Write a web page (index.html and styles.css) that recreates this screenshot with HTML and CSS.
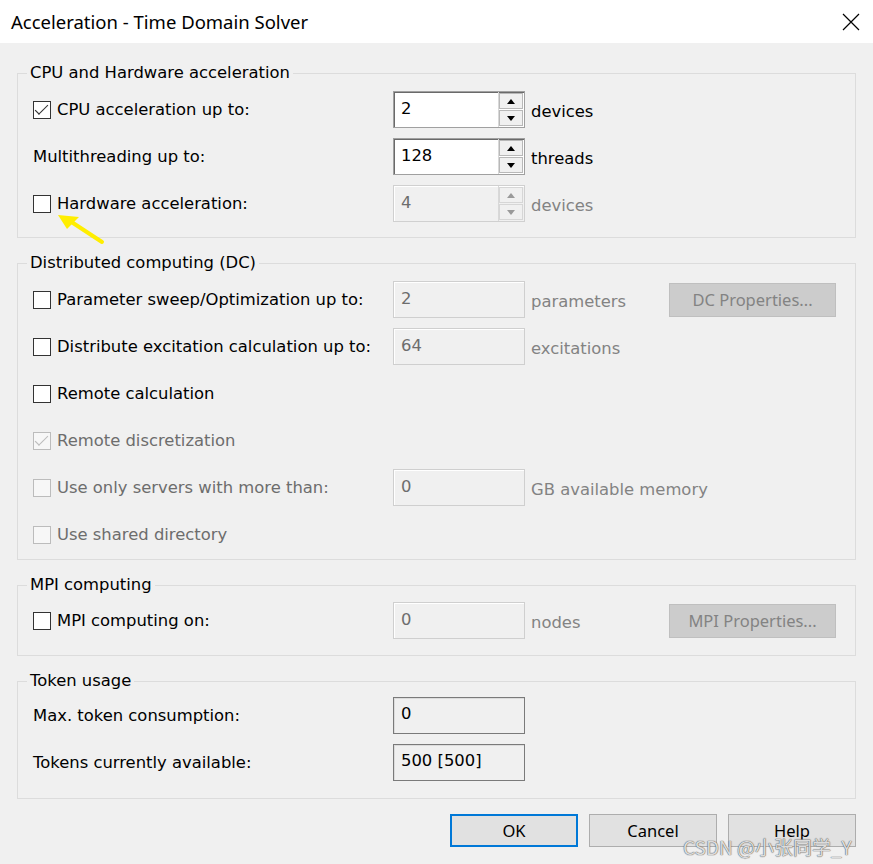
FILE: index.html
```html
<!DOCTYPE html>
<html>
<head>
<meta charset="utf-8">
<link rel="stylesheet" href="styles.css">
</head>
<body>
<div class="dialog">
  <div class="titlebar">
    <span class="title">Acceleration - Time Domain Solver</span>
    <svg class="close" width="18" height="18" viewBox="0 0 18 18"><path d="M1 1 L17 17 M17 1 L1 17" stroke="#000" stroke-width="1.2" fill="none"/></svg>
  </div>
  <div class="content">
    <fieldset class="group g1">
      <legend>CPU and Hardware acceleration</legend>
      <div class="row">
        <label class="lbl"><span class="cb checked"></span>CPU acceleration up to:</label>
        <div class="spin"><span class="val">2</span><span class="arrows"><span class="ab"><i class="up"></i></span><span class="ab"><i class="down"></i></span></span></div>
        <span class="unit">devices</span>
      </div>
      <div class="row">
        <label class="lbl plain">Multithreading up to:</label>
        <div class="spin"><span class="val">128</span><span class="arrows"><span class="ab"><i class="up"></i></span><span class="ab"><i class="down"></i></span></span></div>
        <span class="unit">threads</span>
      </div>
      <div class="row">
        <label class="lbl"><span class="cb"></span>Hardware acceleration:</label>
        <div class="spin disabled"><span class="val">4</span><span class="arrows"><span class="ab"><i class="up"></i></span><span class="ab"><i class="down"></i></span></span></div>
        <span class="unit dis">devices</span>
      </div>
    </fieldset>

    <fieldset class="group g2">
      <legend>Distributed computing (DC)</legend>
      <div class="row">
        <label class="lbl"><span class="cb"></span>Parameter sweep/Optimization up to:</label>
        <div class="field disabled">2</div>
        <span class="unit dis">parameters</span>
        <button class="btn dbtn">DC Properties...</button>
      </div>
      <div class="row">
        <label class="lbl"><span class="cb"></span>Distribute excitation calculation up to:</label>
        <div class="field disabled">64</div>
        <span class="unit dis">excitations</span>
      </div>
      <div class="row">
        <label class="lbl"><span class="cb"></span>Remote calculation</label>
      </div>
      <div class="row">
        <label class="lbl dis"><span class="cb checked dcb"></span>Remote discretization</label>
      </div>
      <div class="row">
        <label class="lbl dis"><span class="cb dcb"></span>Use only servers with more than:</label>
        <div class="field disabled">0</div>
        <span class="unit dis wide">GB available memory</span>
      </div>
      <div class="row">
        <label class="lbl dis"><span class="cb dcb"></span>Use shared directory</label>
      </div>
    </fieldset>

    <fieldset class="group g3">
      <legend>MPI computing</legend>
      <div class="row">
        <label class="lbl"><span class="cb"></span>MPI computing on:</label>
        <div class="field disabled">0</div>
        <span class="unit dis">nodes</span>
        <button class="btn dbtn">MPI Properties...</button>
      </div>
    </fieldset>

    <fieldset class="group g4">
      <legend>Token usage</legend>
      <div class="row">
        <label class="lbl plain">Max. token consumption:</label>
        <div class="field ro">0</div>
      </div>
      <div class="row">
        <label class="lbl plain">Tokens currently available:</label>
        <div class="field ro">500 [500]</div>
      </div>
    </fieldset>

    <div class="buttons">
      <button class="btn pbtn default">OK</button>
      <button class="btn pbtn">Cancel</button>
      <button class="btn pbtn">Help</button>
    </div>
  </div>

  <svg class="arrow" width="60" height="40" viewBox="0 0 60 40"><path d="M50 35 L18 14" stroke="#ffee00" stroke-width="4" fill="none" stroke-linecap="round"/><polygon points="6,8 27,10 15,22" fill="#ffee00"/></svg>
  <div class="watermark">CSDN @小张同学_Y</div>
</div>
</body>
</html>
```

FILE: styles.css
```css
html, body {
  margin: 0;
  padding: 0;
}
body {
  width: 873px;
  height: 864px;
  overflow: hidden;
  background: #f0f0f0;
  font-family: "DejaVu Sans", "Liberation Sans", sans-serif;
  font-size: 16.4px;
  color: #000;
}
.dialog {
  position: relative;
  width: 873px;
  height: 864px;
}
.titlebar {
  height: 43px;
  background: #fff;
  display: flex;
  align-items: center;
  justify-content: space-between;
  padding: 0 13px 0 11px;
  box-sizing: border-box;
}
.title {
  font-family: "Noto Sans", "Open Sans", sans-serif;
  font-size: 18.5px;
  color: #000;
}
.content {
  padding: 20px 17px 0 17px;
}
.group {
  margin: 0 0 15px 0;
  border: 1px solid #dcdcdc;
  padding: 3px 10px 0 15px;
  min-width: 0;
}
.group legend {
  padding: 0 3px;
  margin-left: -6px;
  line-height: 20px;
  color: #000;
}
.g1 { padding-bottom: 10px; }
.g2 { padding-bottom: 1px; }
.g3 { padding-top: 2px; padding-bottom: 11px; }
.g4 { padding-top: 1px; padding-bottom: 12px; margin-bottom: 14px; }
.row {
  height: 47px;
  display: grid;
  grid-template-columns: 360px 132px 144px 167px;
  align-items: center;
}
.lbl {
  display: flex;
  align-items: center;
  white-space: nowrap;
}
.lbl.dis { color: #6d6d6d; }
.cb {
  width: 16px;
  height: 16px;
  border: 1px solid #333;
  background: #fff;
  margin-right: 6px;
  position: relative;
  flex: none;
}
.cb.dcb {
  border-color: #bcbcbc;
  background: #f7f7f7;
}
.cb.checked::after {
  content: "";
  position: absolute;
  left: 2px;
  top: 2px;
  width: 10px;
  height: 5px;
  border-left: 1.5px solid #333;
  border-bottom: 1.5px solid #333;
  transform: translate(0, 1px) rotate(-45deg) scaleX(1.2);
  transform-origin: 50% 50%;
}
.cb.dcb.checked::after {
  border-color: #bcbcbc;
}
.spin {
  height: 37px;
  box-sizing: border-box;
  border: 1px solid #a0a0a0;
  box-shadow: inset 1px 1px 0 #6a6a6a;
  background: #fff;
  display: flex;
  justify-content: space-between;
}
.spin .val, .field {
  padding: 6px 0 0 7px;
  line-height: 22px;
}
.arrows {
  display: flex;
  flex-direction: column;
  gap: 1px;
  padding: 1px 1px 1px 0;
  width: 24px;
  border-left: 1px solid #d8d8d8;
}
.ab {
  flex: 1;
  border: 1px solid #b8b8b8;
  background: #f0f0f0;
  display: flex;
  align-items: center;
  justify-content: center;
}
.ab i {
  width: 0;
  height: 0;
  border-left: 4px solid transparent;
  border-right: 4px solid transparent;
}
.ab i.up { border-bottom: 5px solid #000; }
.ab i.down { border-top: 5px solid #000; }
.spin.disabled {
  background: #f0f0f0;
  border-color: #d0d0d0;
  box-shadow: inset 1px 1px 0 #fff;
  color: #6d6d6d;
}
.spin.disabled .ab { border-color: #d6d6d6; }
.spin.disabled .ab i.up { border-bottom-color: #9a9a9a; }
.spin.disabled .ab i.down { border-top-color: #9a9a9a; }
.field {
  height: 37px;
  box-sizing: border-box;
  border: 1px solid #cfcfcf;
  box-shadow: inset 1px 1px 0 #fff;
  color: #6d6d6d;
  align-self: center;
}
.field.ro {
  border: 1px solid #7a7a7a;
  box-shadow: inset 1px 1px 0 #dcdcdc;
  color: #000;
  width: 132px;
  box-sizing: border-box;
  padding-top: 5px;
}
.unit {
  padding-left: 6px;
  margin-top: 4px;
  white-space: nowrap;
}
.unit.dis { color: #838383; }
.btn {
  font-family: "Noto Sans", "Open Sans", sans-serif;
  font-size: 16.5px;
  box-sizing: border-box;
  cursor: default;
}
.dbtn {
  height: 34px;
  width: 167px;
  background: #cccccc;
  border: 1px solid #bfbfbf;
  color: #838383;
  padding: 0;
}
.buttons {
  display: flex;
  justify-content: flex-end;
  gap: 11px;
  padding-top: 1px;
}
.pbtn {
  width: 128px;
  height: 33px;
  background: #e1e1e1;
  border: 1px solid #adadad;
  color: #000;
  padding: 0;
}
.pbtn.default {
  border: 2px solid #0078d7;
}
.arrow {
  position: absolute;
  left: 52px;
  top: 207px;
}
.watermark {
  position: absolute;
  left: 683px;
  top: 833px;
  font-family: "Noto Sans CJK SC", "Noto Sans", sans-serif;
  font-size: 19px;
  color: rgba(245, 245, 245, 0.85);
  text-shadow: 0 0 1px #555, 0 0 1px #555;
  white-space: nowrap;
}
```
